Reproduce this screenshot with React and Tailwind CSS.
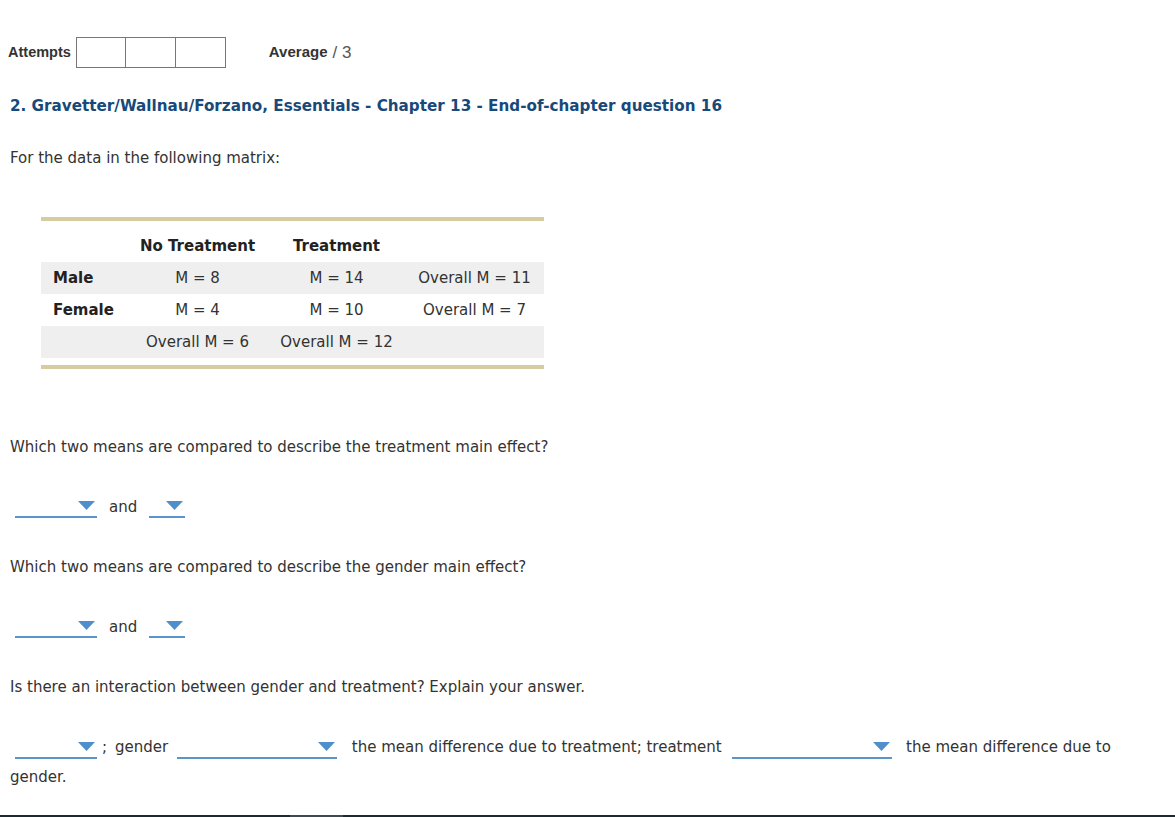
import React from "react";

const body = { fontFamily: '"DejaVu Sans", Verdana, sans-serif' };

function Select({ width, spaced }) {
  return (
    <span
      className={`relative inline-block align-middle border-b-2 border-[#5a95c9] h-[22px] ${spaced ? "mx-[5px]" : "mx-[2px]"}`}
      style={{ width }}
    >
      <svg
        className="absolute right-[2px] top-[5px]"
        width="17"
        height="9"
        viewBox="0 0 17 9"
      >
        <path d="M0 0 H17 L8.5 9 Z" fill="#4f8fcb" />
      </svg>
    </span>
  );
}

function Matrix() {
  const cell = "h-8 flex items-center justify-center text-[15px] text-[#333]";
  const label = "h-8 flex items-center pl-3 font-bold text-[15px] text-[#222]";
  const head = "h-[41px] pt-[15px] leading-5 text-center font-bold text-[15px] text-[#222]";
  return (
    <div className="ml-[41px] w-[503px] mt-[49px]">
      <div className="h-1 bg-[#d6cca2]" />
      <div className="grid grid-cols-[94px_125px_153px_131px]">
        <div className={head} />
        <div className={head}>No Treatment</div>
        <div className={head}>Treatment</div>
        <div className={head} />

        <div className={`bg-[#efefef] ${label}`}>Male</div>
        <div className={`bg-[#efefef] ${cell}`}>M = 8</div>
        <div className={`bg-[#efefef] ${cell}`}>M = 14</div>
        <div className={`bg-[#efefef] ${cell} pr-2`}>Overall M = 11</div>

        <div className={label}>Female</div>
        <div className={cell}>M = 4</div>
        <div className={cell}>M = 10</div>
        <div className={`${cell} pr-2`}>Overall M = 7</div>

        <div className="bg-[#efefef] h-8" />
        <div className={`bg-[#efefef] ${cell}`}>Overall M = 6</div>
        <div className={`bg-[#efefef] ${cell}`}>Overall M = 12</div>
        <div className="bg-[#efefef] h-8" />
      </div>
      <div className="h-1 bg-[#d6cca2] mt-[7px]" />
    </div>
  );
}

export default function App() {
  return (
    <div className="relative w-[1175px] h-[817px] bg-white overflow-hidden" style={body}>
      <div
        className="flex items-center pl-2 pt-[37px] h-[68px]"
        style={{ fontFamily: '"Liberation Sans", Arial, sans-serif' }}
      >
        <span className="text-[14.5px] font-bold text-[#333] mr-[5px]">Attempts</span>
        <div className="flex">
          <div className="w-[50px] h-[31px] border border-[#777]" />
          <div className="w-[50px] h-[31px] border border-l-0 border-[#777]" />
          <div className="w-[50px] h-[31px] border border-l-0 border-[#777]" />
        </div>
        <span className="ml-[43px] text-[15px] font-bold text-[#333]">Average</span>
        <span className="ml-[5px] text-[17px] text-[#555]">/ 3</span>
      </div>

      <div className="px-[10px]">
        <h2 className="mt-[28px] text-[15.2px] font-bold text-[#17497a] leading-5">
          2. Gravetter/Wallnau/Forzano, Essentials - Chapter 13 - End-of-chapter question 16
        </h2>
        <p className="mt-[32px] text-[15px] text-[#333] leading-5">For the data in the following matrix:</p>
      </div>

      <Matrix />

      <div className="px-[10px] text-[15px] text-[#333]">
        <p className="mt-[68px] leading-5">Which two means are compared to describe the treatment main effect?</p>
        <div className="mt-[38px] flex items-center gap-[10px] pl-[3px] h-[24px]">
          <Select width={82} />
          <span>and</span>
          <Select width={36} />
        </div>

        <p className="mt-[38px] leading-5">Which two means are compared to describe the gender main effect?</p>
        <div className="mt-[38px] flex items-center gap-[10px] pl-[3px] h-[24px]">
          <Select width={82} />
          <span>and</span>
          <Select width={36} />
        </div>

        <p className="mt-[38px] leading-5">Is there an interaction between gender and treatment? Explain your answer.</p>
        <p className="mt-[35px] leading-[30px] pr-[15px]">
          <Select width={82} spaced />;<span className="ml-[8px] mr-[4px]">gender</span>
          <Select width={160} spaced /> &nbsp;the mean difference due to treatment; treatment{" "}
          <Select width={160} spaced /> &nbsp;the mean difference due to gender.
        </p>
      </div>

      <div className="absolute left-0 right-0 bottom-0 h-[2px] bg-[#1b2a32] flex">
        <div className="ml-[290px] w-[53px] bg-[#3d4a52]" />
      </div>
    </div>
  );
}
